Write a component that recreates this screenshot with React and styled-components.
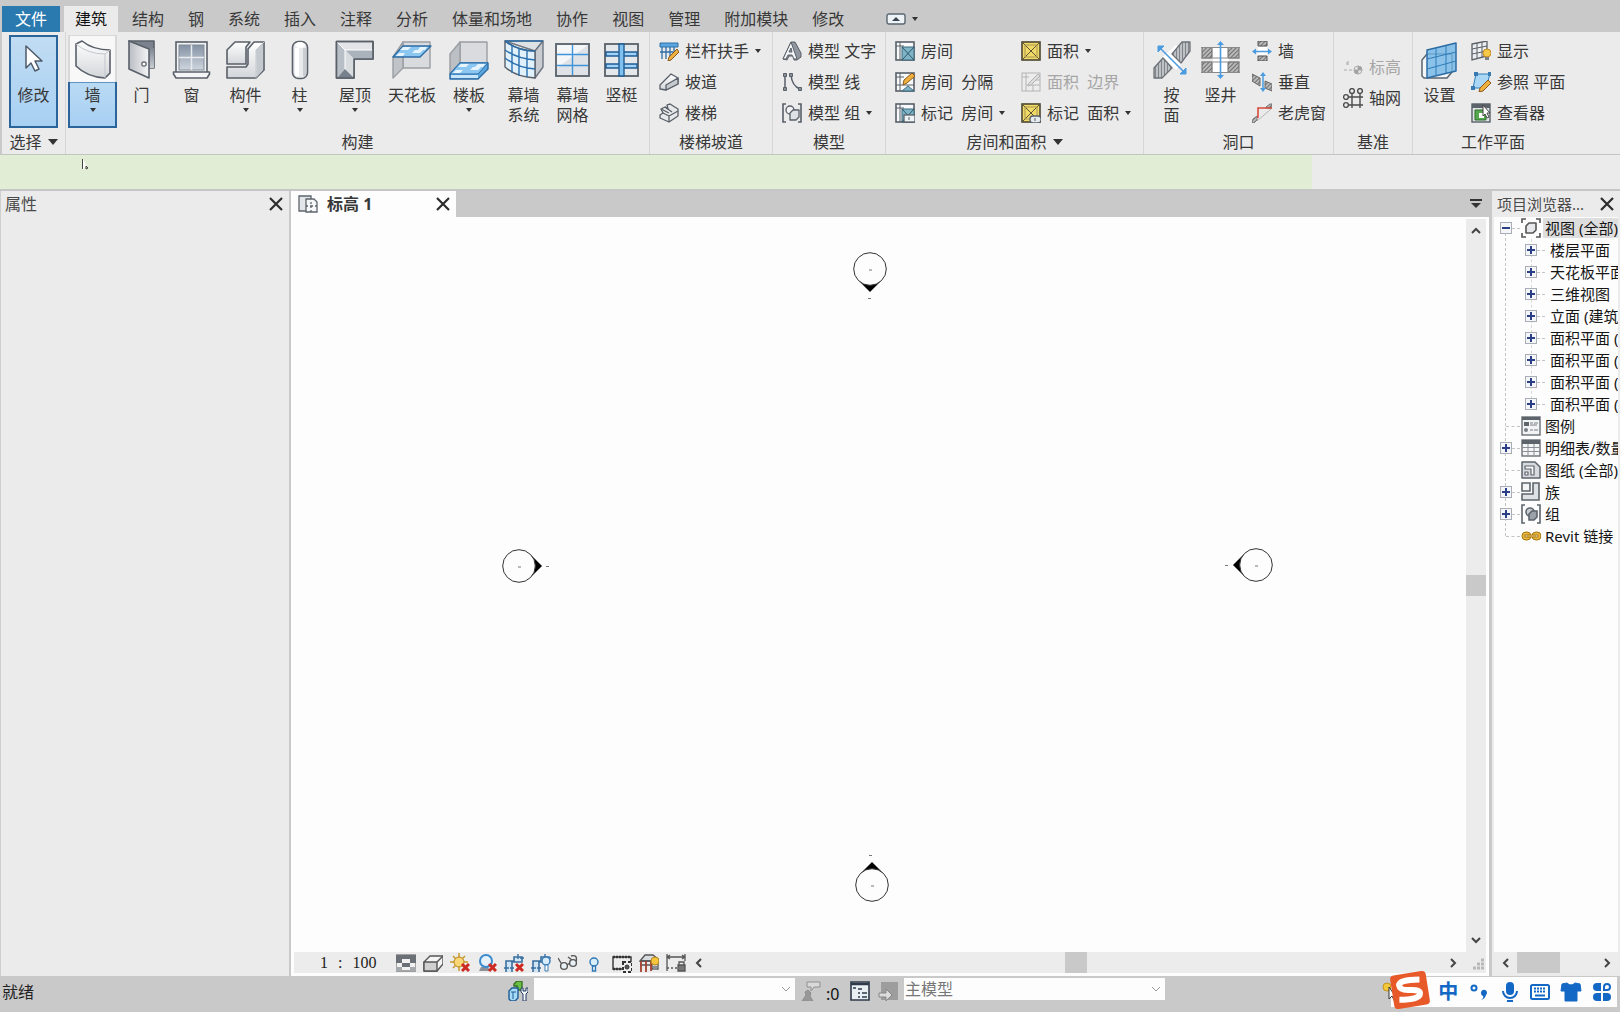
import React from "react";
import styled, { createGlobalStyle, css } from "styled-components";

const GlobalStyle = createGlobalStyle`
  * { box-sizing: border-box; }
  html, body { margin: 0; padding: 0; }
  body {
    background: #c9c9c9;
    color: #383838;
    font-family: "Noto Sans", "Noto Sans CJK SC", sans-serif;
    font-size: 16px;
    line-height: 20px;
    overflow: hidden;
  }
  button, select { font: inherit; color: inherit; border: 0; padding: 0; margin: 0; background: none; }
  ul { list-style: none; margin: 0; padding: 0; }
  h2, h3 { margin: 0; font: inherit; }
  svg { display: block; flex: none; }
`;

/* ---------- icons ---------- */

const D = "#596069";
const B = "#2c6ca5";

const Defs = () => (
  <DefsSvg aria-hidden="true">
    <defs>
      <linearGradient id="lightGrad" x1="0" y1="0" x2="0" y2="1">
        <stop offset="0" stopColor="#ffffff" />
        <stop offset="1" stopColor="#d3d6da" />
      </linearGradient>
      <linearGradient id="sideGrad" x1="0" y1="0" x2="1" y2="0">
        <stop offset="0" stopColor="#b9bdc3" />
        <stop offset="1" stopColor="#f4f5f6" />
      </linearGradient>
      <linearGradient id="darkGrad" x1="0" y1="0" x2="0" y2="1">
        <stop offset="0" stopColor="#7d8690" />
        <stop offset="1" stopColor="#c9cdd2" />
      </linearGradient>
      <linearGradient id="paneGrad" x1="0" y1="0" x2="0" y2="1">
        <stop offset="0" stopColor="#8492a4" />
        <stop offset="1" stopColor="#cfd6de" />
      </linearGradient>
      <pattern id="hatch" width="3" height="3" patternUnits="userSpaceOnUse" patternTransform="rotate(45)">
        <rect width="3" height="3" fill="#b8b8b8" />
        <rect width="1" height="3" fill="#6f6f6f" />
      </pattern>
      <pattern id="vhatch" width="3" height="3" patternUnits="userSpaceOnUse">
        <rect width="3" height="3" fill="#bfc2c5" />
        <rect width="1" height="3" fill="#80868c" />
      </pattern>
    </defs>
  </DefsSvg>
);

const large = {
  cursor: (
    <path d="M12 6 V28 L17 23 L21 31 L25 29 L21 21 L28 21Z" fill="#fff" stroke="#4e5a68" strokeWidth="1.5" strokeLinejoin="round" />
  ),
  wall: (
    <g stroke={D} strokeWidth="1.6" strokeLinejoin="round">
      <path d="M3 4 L9 1 Q20 10 37 10 V33 L32 38 Q14 37 3 26Z" fill="url(#lightGrad)" />
      <path d="M3 4 Q15 14 32 14 V38 M32 14 L37 10" fill="none" stroke="#c3c7cb" strokeWidth="1" />
    </g>
  ),
  door: (
    <g stroke={D} strokeWidth="1.6" strokeLinejoin="round">
      <path d="M7 1 H32 V28 H26Z" fill="#7b848e" />
      <path d="M26 8 H32 V28 H26Z" fill="url(#darkGrad)" stroke="none" />
      <path d="M7 1 L27 9 V38 L7 29Z" fill="url(#sideGrad)" />
      <circle cx="22" cy="24" r="2.2" fill="#fff" strokeWidth="1.2" />
    </g>
  ),
  window: (
    <g stroke={D} strokeWidth="1.6">
      <rect x="4" y="2" width="31" height="31" fill="#f2f3f4" />
      <rect x="7" y="5" width="25" height="25" fill="url(#paneGrad)" stroke="#838c97" strokeWidth="1" />
      <path d="M19.500 5 V30 M7 17.500 H32" stroke="#e8ebee" strokeWidth="1.500" />
      <path d="M1.500 32 H37.500 V34 L35 38 H4 L1.500 34Z" fill="#f4f5f6" strokeLinejoin="round" />
    </g>
  ),
  component: (
    <g stroke={D} strokeWidth="1.6" strokeLinejoin="round">
      <path d="M1 10 L9 2 H24 L20 7 V24 H1Z" fill="url(#lightGrad)" />
      <path d="M1 27 H20 L22 24 V9 L28 2 H38 V30 L30 38 H1Z" fill="url(#lightGrad)" />
      <path d="M30 38 V10 M30 10 L38 2" stroke="#c5c9cd" strokeWidth="1" fill="none" />
      <path d="M30 10 L37 3 V30 L31 37Z" fill="#c4c9cf" stroke="none" />
    </g>
  ),
  column: (
    <g>
      <rect x="12.500" y="1.500" width="15" height="37" rx="6" fill="#e9ebed" stroke={D} strokeWidth="1.600" />
      <rect x="15" y="8" width="4" height="28" fill="#fff" />
      <ellipse cx="20" cy="5" rx="5" ry="3" fill="#fff" />
      <rect x="23" y="8" width="3" height="28" fill="#c9cdd2" />
    </g>
  ),
  roof: (
    <g stroke={D} strokeWidth="1.6" strokeLinejoin="round">
      <path d="M1.500 1.500 H38 V19 H19 V38 H1.500Z" fill="#e2e4e7" />
      <path d="M10 10 H38 V19 H19Z" fill="#aab2bb" stroke="none" />
      <path d="M2 2 L10 10 V29 L2 38Z" fill="#b9bfc6" stroke="none" />
      <path d="M10 29 L18 37 H3Z" fill="#76818d" stroke="none" />
      <path d="M10 10 L19 19 V37 L10 29Z" fill="#d9dcdf" stroke="none" />
      <path d="M2 2 L10 10 H38 M10 10 V29" fill="none" stroke="#fff" strokeWidth="1" />
      <path d="M1.500 1.500 H38 V19 H19 V38 H1.500Z" fill="none" />
    </g>
  ),
  ceiling: (
    <g strokeLinejoin="round" strokeWidth="1.4">
      <path d="M11 2 H38 V28 H11Z" fill="#d9dbde" stroke="#9b9ea3" />
      <path d="M1 17 L11 2 V28 L1 38Z" fill="#c0c3c7" stroke="#9b9ea3" />
      <path d="M1 17 L11 6 H39 L28 17Z" fill="#8cc7f2" stroke={B} />
      <path d="M11 7 H19 L16 10 H8Z M23 10 H31 L28 13 H20Z M7 13 H13 L11 16 H4Z M28 7 H35 L33 10 H26Z" fill="#e6f4fd" />
    </g>
  ),
  floor: (
    <g strokeLinejoin="round" strokeWidth="1.400">
      <path d="M11 2 H38 V24 H11Z" fill="#d9dbde" stroke="#9b9ea3" />
      <path d="M1 14 L11 2 V24 L1 34Z" fill="#bcc0c5" stroke="#9b9ea3" />
      <path d="M1 34 L11 23 H39 V29 L29 39 H1Z" fill="#5aa5dc" stroke={B} />
      <path d="M1 34 L11 23 H39 L29 34Z" fill="#8cc7f2" stroke={B} strokeWidth="1" />
      <path d="M12 24 H20 L17 27 H9Z M24 27 H32 L29 30 H21Z M7 30 H14 L11 33 H4Z M29 24 H36 L34 27 H26Z" fill="#e6f4fd" />
      <path d="M2 35 H29 V38 H2Z" fill="#c8e6fa" />
    </g>
  ),
  curtainSystem: (
    <g strokeLinejoin="round" strokeWidth="1.400">
      <path d="M1 1 H39 L31 11Z" fill="#dfe2e5" stroke="#6d7680" />
      <path d="M31 11 L39 1 V27 L31 38Z" fill="#c9cdd2" stroke="#6d7680" />
      <path d="M1 1 Q14 11 31 11 V38 Q12 37 1 27Z" fill="#e1f1fb" stroke={D} />
      <path d="M1 10 Q14 19 31 20 M1 18 Q14 28 31 29 M8 6 V33 M15 9 V36 M23 11 V37" fill="none" stroke="#2a6fae" />
      <path d="M1 1 Q14 11 31 11 M1 1 H39" fill="none" stroke={B} />
    </g>
  ),
  curtainGrid: (
    <g>
      <rect x="3" y="4" width="33" height="32" fill="#dfe2e6" stroke={D} strokeWidth="1.800" />
      <path d="M4 5 H35 L4 28Z" fill="#f5f6f8" />
      <path d="M4 14.500 H35 M4 25.500 H35 M19.500 5 V35" stroke="#3f94da" strokeWidth="1.400" />
    </g>
  ),
  mullion: (
    <g>
      <rect x="3" y="4" width="33" height="32" fill="#e5e8eb" stroke={D} strokeWidth="1.800" />
      <path d="M4 12 H35 V16 H4Z M4 24 H35 V28 H4Z" fill="#9fd2f6" stroke="#1f5c94" strokeWidth="1.400" />
      <path d="M17 4 H22 V36 H17Z" fill="#7fc0ee" stroke="#1f5c94" strokeWidth="1.400" />
    </g>
  ),
  byFace: (
    <g strokeLinejoin="round">
      <path d="M11 17 L24 5 L35 17 L24 30Z" fill="#fff" />
      <path d="M20 14 L30 2 H38 V11 L29 23Z" fill="url(#vhatch)" stroke="#6b7177" strokeWidth="1.300" />
      <path d="M2 38 V28 L11 18 L20 28 L10 38Z" fill="url(#vhatch)" stroke="#6b7177" strokeWidth="1.300" />
      <path d="M8 8 L33 33" stroke="#4a9be0" strokeWidth="1.600" />
      <path d="M6 6 H12 L6 12Z M34 34 H28 L34 28Z" fill="#4a9be0" stroke="#4a9be0" />
    </g>
  ),
  shaft: (
    <g>
      <rect x="12" y="7" width="16" height="26" fill="#fff" />
      <path d="M1 7.500 H11 V18 H1Z M27 7.500 H38 V18 H27Z M1 22 H11 V32.500 H1Z M27 22 H38 V32.500 H27Z" fill="url(#hatch)" stroke="#6b6b6b" />
      <path d="M0 7.500 H39 M0 18 H39 M0 22 H39 M0 32.500 H39" stroke="#8a8a8a" />
      <path d="M19.500 4 V36" stroke="#4a9be0" strokeWidth="1.600" />
      <path d="M19.500 1 L23 5 H16Z M19.500 39 L23 35 H16Z" fill="#4a9be0" />
    </g>
  ),
  workPlane: (
    <g strokeLinejoin="round">
      <path d="M2 20 L7 14 H32 V32 L27 38 H4 L2 36Z" fill="#f4f6f8" stroke="#5a6672" strokeWidth="1.500" />
      <path d="M7 10 L36 3 V31 L7 38Z" fill="#6fb5e6" fillOpacity=".8" stroke={B} strokeWidth="1.500" />
      <path d="M16 8 V36 M26 6 V33 M7 19 L36 12 M7 29 L36 21" stroke="#2f7cb8" fill="none" />
    </g>
  ),
};

const roomBase = (
  <g>
    <rect x="1" y="1" width="18" height="18" fill="#f7f9fa" stroke={D} strokeWidth="1.600" />
    <path d="M5 1 V19 M1 5 H9" stroke={D} />
    <rect x="7" y="6" width="12" height="13" fill="#7fb4c8" stroke="#3d6a7c" />
    <path d="M7 6 L19 19 M19 6 L7 19" stroke="#2c5666" />
  </g>
);
const areaBase = (
  <g>
    <rect x="1" y="1" width="18" height="18" fill="#f1d968" stroke="#4d4630" strokeWidth="1.600" />
    <path d="M1 1 L19 19 M19 1 L1 19" stroke="#5c5334" />
    <rect x="4" y="4" width="12" height="12" fill="none" stroke="#a8984e" />
  </g>
);

const small = {
  railing: (
    <g>
      <path d="M1 2 H19 V6 H1Z" fill="#5aa6e0" stroke="#2f6ea6" />
      <path d="M3 6 V18 M7 6 V18 M11 6 V16 M15 6 V12 M1 11 H14" stroke="#2f6ea6" strokeWidth="1.300" />
      <path d="M18 8 L20 11 L12 19 L9 20 L10 16Z" fill="#f0b040" stroke="#8a5a1a" />
    </g>
  ),
  ramp: (
    <g stroke={D} strokeWidth="1.300" strokeLinejoin="round">
      <path d="M1 13 L12 2 L19 6 V12 L7 18 L1 17Z" fill="url(#lightGrad)" />
      <path d="M7 18 V13 L19 6 V12Z" fill="#c6cace" />
    </g>
  ),
  stairs: (
    <g fill="#e7e9eb" stroke={D} strokeWidth="1.300" strokeLinejoin="round">
      <path d="M1 12 L4 10 L2 6 L6 4 L9 6 L8 2 L11 1 L19 6 V13 L10 19 L1 15Z" />
      <path d="M4 10 L10 13 L19 8 M6 4 L13 9 M2 6 L10 10 M11 1 L8 2 M10 13 V19" fill="none" />
    </g>
  ),
  modelText: (
    <g strokeLinejoin="round" stroke={D}>
      <path d="M1 18 L9 1 H13 L19 12 V16 L15 19 H12 L11 15 H7 L5 19Z" fill="#8f969e" />
      <path d="M1 18 L9 1 L15 18 H12 L10 14 H6 L4 18Z" fill="#f5f6f7" />
      <path d="M7 11 H10 L9 7Z" fill="#8f969e" />
    </g>
  ),
  modelLine: (
    <g fill="none" stroke={D} strokeWidth="1.500">
      <path d="M3 3 V17 M9 3 Q10 14 18 17" />
      <path d="M1.500 1.500 H4.500 V4.500 H1.500Z M1.500 15.500 H4.500 V18.500 H1.500Z M7.500 1.500 H10.500 V4.500 H7.500Z M16.500 15.500 H19.500 V18.500 H16.500Z" fill="#8a9199" strokeWidth="1" />
    </g>
  ),
  modelGroup: (
    <g fill="none" stroke={D} strokeWidth="1.300">
      <path d="M4 1 H1 V19 H4 M16 1 H19 V19 H16" strokeWidth="1.600" />
      <circle cx="8" cy="7" r="4" fill="#f2f3f4" />
      <path d="M8 10 L11 7 H17 V14 L14 17 H8Z" fill="#dfe2e5" strokeLinejoin="round" />
    </g>
  ),
  room: roomBase,
  roomSeparator: (
    <g>
      <rect x="1" y="1" width="18" height="18" fill="#f7f9fa" stroke={D} strokeWidth="1.600" />
      <path d="M5 1 V19 M1 5 H9 M1 13 H19" stroke={D} />
      <path d="M7 19 L13 14 L19 19Z" fill="#7fb4c8" stroke="#3d6a7c" />
      <path d="M17 1 L20 4 L12 11 L8 13 L9 8Z" fill="#f0b040" stroke="#8a5a1a" strokeLinejoin="round" />
    </g>
  ),
  tagRoom: (
    <g>
      {roomBase}
      <rect x="9" y="12" width="11" height="7" fill="#eef3f5" stroke={D} strokeWidth="1.300" />
      <path d="M14 14 V17" stroke={D} />
    </g>
  ),
  area: areaBase,
  areaBoundary: (
    <g stroke="#b4b4b4" fill="none">
      <rect x="1" y="1" width="18" height="18" fill="#ececec" />
      <path d="M5 1 V19 M1 5 H8 M5 13 H19 M12 13 V19 M14 8 H19" />
      <path d="M17 2 L19 4 L10 13 L7 14 L8 11Z" fill="#dcdcdc" />
    </g>
  ),
  tagArea: (
    <g>
      {areaBase}
      <rect x="9" y="13" width="11" height="7" rx="3" fill="#e5eaed" stroke={D} strokeWidth="1.300" />
      <path d="M14 15 V18" stroke={D} />
    </g>
  ),
  openWall: (
    <g>
      <path d="M6 0 H15 V5 H6Z M6 15 H15 V20 H6Z" fill="url(#hatch)" stroke="#555" />
      <path d="M6 6 H15 V14 H6Z" fill="#fff" />
      <path d="M2 10.500 H18" stroke="#4a9be0" strokeWidth="1.500" />
      <path d="M0 10.500 L4 7.500 V13.500Z M20 10.500 L16 7.500 V13.500Z" fill="#4a9be0" />
    </g>
  ),
  openVertical: (
    <g>
      <path d="M0 2 L8 6 V14 L0 9Z M13 9 L20 12 V19 L13 16Z" fill="url(#hatch)" stroke="#666" />
      <path d="M11 3 V17" stroke="#4a9be0" strokeWidth="1.500" />
      <path d="M11 0 L14 4 H8Z M11 20 L14 16 H8Z" fill="#4a9be0" />
    </g>
  ),
  dormer: (
    <g>
      <path d="M14 4 L18 1 H20 V5 H14Z M1 16 L5 13 V17 L2 20 H0Z" fill="url(#hatch)" stroke="#777" />
      <path d="M5 18 L19 6" stroke="#b5b5b5" />
      <path d="M20 5 H6 V15" fill="none" stroke="#d8493a" strokeWidth="1.600" />
    </g>
  ),
  level: (
    <g stroke="#ababab">
      <path d="M1 13 H12" strokeDasharray="3 2" />
      <path d="M4 5 V8 M5 4 V8" />
      <circle cx="15" cy="13" r="4" fill="#e8e8e8" />
      <path d="M15 9 A4 4 0 0 1 19 13 H15Z M15 17 A4 4 0 0 1 11 13 H15Z" fill="#9c9c9c" />
    </g>
  ),
  grid: (
    <g fill="none" stroke="#4c4c4c" strokeWidth="1.400">
      <path d="M9 5 V20 M17 5 V20 M5 9 H20 M5 17 H20" />
      <circle cx="9" cy="3" r="2.400" />
      <circle cx="17" cy="3" r="2.400" />
      <circle cx="3" cy="9" r="2.400" />
      <circle cx="3" cy="17" r="2.400" />
    </g>
  ),
  show: (
    <g>
      <path d="M1 3 L16 0 V15 L1 19Z" fill="#eceeef" stroke={D} strokeWidth="1.300" />
      <path d="M6 2 V18 M11 1 V17 M1 8 L16 5 M1 13 L16 10" stroke={D} />
      <circle cx="16" cy="12" r="4" fill="#f8c84a" stroke="#c48a1c" />
      <path d="M14 16 H18 V19 H14Z" fill="#7a7f85" />
    </g>
  ),
  refPlane: (
    <g>
      <path d="M5 2 H19 L15 16 H2Z" fill="#a9d7f5" stroke="#2f7cb8" />
      <path d="M3 0 H7 V4 H3Z M17 0 H20 V4 H17Z M0 14 H4 V18 H0Z" fill="#3a7ab2" />
      <path d="M17 8 L20 11 L12 19 L8 20 L9 16Z" fill="#f0b040" stroke="#8a5a1a" />
    </g>
  ),
  viewer: (
    <g>
      <rect x="1" y="1" width="18" height="18" fill="#dfe3e6" stroke={D} strokeWidth="1.400" />
      <path d="M1 1 H19 V5 H1Z" fill="#5b6269" />
      <path d="M4 7 H15 V17 H4Z" fill="#56a94f" stroke="#2f6f2c" />
      <path d="M8 10 H13 V15 H8Z" fill="#fff" />
      <path d="M12 2 V13 L14 11 L16 15 L18 14 L16 10 H19Z" fill="#fff" stroke="#444" />
    </g>
  ),
};

const redX = <path d="M12 11 L19 18 M19 11 L12 18" stroke="#cc2a22" strokeWidth="3" />;
const bluePipe = (
  <g>
    <path d="M2 19 V8 H10 V4 H18 V9 H8 V19" fill="#cfe5f6" stroke="#3b6f9f" strokeWidth="1.600" />
    <path d="M0 15 H5 M6 15 H10 M14 1 V6 M16 5 H20" stroke="#3b6f9f" strokeWidth="1.400" />
  </g>
);
const viewIcons = {
  详细程度: (
    <g>
      <rect x="0" y="2" width="20" height="16" fill="#f1f1f1" stroke="#555" />
      <path d="M0 2 H20 V6 H0Z M0 6 H6 V10 H0Z M14 6 H20 V10 H14Z M6 10 H14 V14 H6Z" fill="#6b7076" />
      <path d="M0 14 H6 V18 H0Z M14 14 H20 V18 H14Z" fill="#a4a9ae" />
    </g>
  ),
  视觉样式: (
    <g fill="#f4f4f4" stroke="#555" strokeWidth="1.400" strokeLinejoin="round">
      <path d="M1 9 L7 3 H20 V11 L14 18 H1Z" />
      <path d="M1 9 H14 V18 H1Z" fill="#d0d0d0" />
      <path d="M14 9 L20 3" />
    </g>
  ),
  日光路径: (
    <g>
      <path d="M9 0 V18 M0 9 H18 M3 3 L15 15 M15 3 L3 15" stroke="#c79a2b" strokeWidth="1.500" />
      <circle cx="9" cy="9" r="5" fill="#f9d676" stroke="#b8861c" />
      {redX}
    </g>
  ),
  阴影: (
    <g>
      <path d="M2 18 H13 L11 14 H4Z" fill="#8b9096" />
      <circle cx="9" cy="8" r="6" fill="#e5f2fb" stroke="#3b8bcf" strokeWidth="2" />
      {redX}
    </g>
  ),
  裁剪视图: (
    <g>
      {bluePipe}
      {redX}
    </g>
  ),
  显示裁剪区域: (
    <g>
      {bluePipe}
      <circle cx="15" cy="8" r="4" fill="#d8ecfa" stroke="#3b7db8" strokeWidth="1.500" />
      <path d="M14 12 H17 V18 H14Z" fill="#fff" stroke="#3b7db8" />
    </g>
  ),
  临时隐藏隔离: (
    <g fill="none" stroke="#555" strokeWidth="1.400">
      <path d="M0 5 L3 10 M10 4 L14 7 M13 3 Q20 1 18 9" />
      <circle cx="6" cy="13" r="3.400" fill="#e9f1f6" />
      <circle cx="15" cy="10" r="3.400" fill="#e9f1f6" />
      <path d="M9 12 L12 10" />
    </g>
  ),
  显示隐藏的图元: (
    <g stroke="#2f77b4" strokeWidth="1.400">
      <circle cx="9" cy="9" r="4" fill="#d9eefc" />
      <path d="M7.500 13 H10.500 V18 H7.500Z" fill="#eef6fb" />
    </g>
  ),
  临时视图属性: (
    <g fill="none" stroke="#333">
      <path d="M1 4 H19 V16 H1Z" strokeWidth="1.400" />
      <path d="M1 4 H19 M1 16 H10" strokeWidth="2.500" strokeDasharray="2 1" />
      <path d="M11 9 H20 V19 H11Z" fill="#eee" strokeWidth="2" strokeDasharray="3 2" />
      <circle cx="15" cy="14" r="2" fill="#555" />
    </g>
  ),
  分析模型: (
    <g>
      <path d="M1 8 L6 2 H14 L19 6 V16 H13 V8Z" fill="#d9dcdf" stroke="#555" strokeWidth="1.300" />
      <path d="M1 8 H13 M1 12 H13" stroke="#555" strokeWidth="1.400" />
      <path d="M2 8 V19 M7 8 V19 M12 8 V18" stroke="#a5402f" strokeWidth="1.800" />
      <circle cx="16" cy="8" r="4" fill="#f8c53f" stroke="#b8861c" />
      <path d="M14 13 H18 V17 H14Z" fill="#8a8f95" />
    </g>
  ),
  显示约束: (
    <g stroke="#555" fill="none" strokeWidth="1.300">
      <path d="M1 1 V18 M19 1 V8 M1 4 H19 M4 2 L1 4 L4 6 M16 2 L19 4 L16 6" />
      <path d="M1 15 H12" strokeDasharray="2 2" />
      <path d="M12 12 H19 V18 H12Z" fill="#777" />
      <path d="M13 12 V9 H18 V12" />
    </g>
  ),
};

const treeIcons = {
  views: (
    <g fill="none" stroke="#555" strokeWidth="1.600">
      <path d="M5 1 H1 V5 M15 1 H19 V5 M1 15 V19 H5 M19 15 V19 H15" />
      <path d="M5 8 L8 5 H15 V12 L12 15 H5Z" fill="#e6e8eb" strokeLinejoin="round" />
    </g>
  ),
  legend: (
    <g>
      <rect x="1" y="1" width="18" height="18" fill="#f2f3f4" stroke="#6a7077" strokeWidth="1.400" />
      <path d="M1 1 H19 V4 H1Z" fill="#5d646c" />
      <path d="M3 6 H8 V10 H3Z" fill="#5d646c" />
      <circle cx="5" cy="14" r="2" fill="#777e86" />
      <path d="M9 7 H12 M13 7 H17 M9 9 H16 M9 14 H12 M13 14 H17" stroke="#777e86" />
    </g>
  ),
  schedule: (
    <g>
      <rect x="1" y="2" width="18" height="16" fill="#f4f5f6" stroke="#6a7077" strokeWidth="1.400" />
      <path d="M1 2 H19 V6 H1Z" fill="#5d646c" />
      <path d="M1 9.500 H19 M1 13.500 H19 M7 6 V17 M13 6 V17" stroke="#8a9097" />
    </g>
  ),
  sheet: (
    <g fill="#d7dbdf" stroke="#5d646c" strokeWidth="1.500" strokeLinejoin="round">
      <path d="M1 2 H14 L19 7 V18 H1Z" />
      <path d="M4 6 H13 V15 H10 V9 H4Z M4 12 H7 V15 H4Z" fill="#f8f9fa" strokeWidth="1.200" />
    </g>
  ),
  family: (
    <g fill="#f4f5f6" stroke="#5d646c" strokeWidth="1.600">
      <path d="M1 1 H9 V9 H1Z" />
      <path d="M12 1 H18 V18 H1 V12 H12Z" fill="#dfe2e5" />
    </g>
  ),
  group: (
    <g fill="none" stroke="#5d646c" strokeWidth="1.600">
      <path d="M4 1 H1 V19 H4 M16 1 H19 V19 H16" />
      <circle cx="9" cy="8" r="4" fill="#c9cdd2" />
      <path d="M8 10 L11 7 H16 V13 L13 16 H8Z" fill="#9aa1a9" />
    </g>
  ),
  link: (
    <g fill="none" stroke="#a87610">
      <rect x="1" y="6" width="9" height="8" rx="4" fill="#e8b93c" />
      <rect x="11" y="6" width="9" height="8" rx="4" fill="#e8b93c" />
      <rect x="4" y="9" width="3" height="2" fill="#fdfdfd" />
      <rect x="14" y="9" width="3" height="2" fill="#fdfdfd" />
      <path d="M7 10 H14" strokeWidth="3" />
      <path d="M7 10 H14" stroke="#f3cf67" />
    </g>
  ),
};

const LargeIcon = ({ name }) => (
  <svg width="40" height="40" viewBox="0 0 40 40" aria-hidden="true">{large[name]}</svg>
);
const SmallIcon = ({ art }) => (
  <svg width="20" height="20" viewBox="0 0 20 20" aria-hidden="true">{art}</svg>
);
const Arrow = ({ w = 6 }) => (
  <svg width={w} height={w / 2 + 1} viewBox="0 0 12 8" preserveAspectRatio="none" aria-hidden="true">
    <path d="M0 0 H12 L6 8Z" fill="#333" />
  </svg>
);
const Chevron = ({ turn = 0, color = "#444", weight = 2 }) => (
  <svg width="12" height="12" viewBox="0 0 12 12" aria-hidden="true">
    <path d="M2 4 L6 8 L10 4" fill="none" stroke={color} strokeWidth={weight} transform={`rotate(${turn} 6 6)`} />
  </svg>
);
const Cross = () => (
  <svg width="14" height="14" viewBox="0 0 14 14" aria-hidden="true">
    <path d="M1 1 L13 13 M13 1 L1 13" stroke="#2c2c2c" strokeWidth="2.200" />
  </svg>
);

/* ---------- layout parts ---------- */

const DefsSvg = styled.svg`
  position: absolute;
  width: 0;
  height: 0;
`;

const Window = styled.div`
  display: flex;
  flex-direction: column;
  height: 100vh;
  background: #c9c9c9;
`;

const TabRow = styled.nav`
  display: flex;
  align-items: stretch;
  height: 32px;
  padding: 6px 0 0 2px;
`;

const RibbonTab = styled.button`
  padding: 0 12px;
  white-space: nowrap;
  ${({ $kind }) =>
    $kind === "file" &&
    css`
      width: 58px;
      margin-right: 4px;
      background: #2a7ab0;
      color: #fff;
    `}
  ${({ $kind }) =>
    $kind === "active" &&
    css`
      width: 54px;
      padding: 0;
      margin-right: 2px;
      background: #ebebeb;
      color: #111;
    `}
`;

const MinimizeButton = styled.button`
  display: flex;
  align-items: center;
  gap: 6px;
  margin-left: 30px;
`;

const Ribbon = styled.div`
  display: flex;
  height: 123px;
  margin-left: 2px;
  background: #ebebeb;
  border-bottom: 1px solid #c2c5c2;
`;

const Panel = styled.section`
  display: flex;
  flex-direction: column;
  flex: none;
  width: ${({ $w }) => $w}px;
  border-right: ${({ $last }) => ($last ? "0" : "1px solid #d6d6d6")};
`;

const PanelBody = styled.div`
  display: flex;
  flex: 1;
  padding: 3px 0 0 ${({ $pad }) => $pad}px;
`;

const PanelTitle = styled.h3`
  display: flex;
  align-items: center;
  justify-content: center;
  gap: 6px;
  height: 24px;
`;

const BigButton = styled.button`
  display: flex;
  flex-direction: column;
  align-items: center;
  width: ${({ $w }) => $w}px;
  height: 93px;
  border: 1px solid transparent;
  padding-top: 4px;
  ${({ $state }) =>
    $state === "on" &&
    css`
      border: 2px solid #2a649b;
      padding-top: 3px;
      background: linear-gradient(#c1dcf2, #a8d0f3);
    `}
  ${({ $state }) =>
    $state === "split" &&
    css`
      border: 2px solid #2a649b;
      border-top: 1px solid #d5d5d5;
      background: linear-gradient(#f8f8f8 0 46px, #5d93c2 46px 47px, #b9daf4 47px, #a8d0f3);
      border-image: linear-gradient(#d8d8d8 0 48px, #2a649b 48px) 1;
    `}
`;

const BigLabel = styled.span`
  display: block;
  margin-top: 5px;
  line-height: 20px;
  white-space: pre-line;
  text-align: center;
`;

const ArrowSlot = styled.span`
  display: flex;
  margin-top: 3px;
`;

const Stack = styled.div`
  display: flex;
  flex-direction: column;
  justify-content: ${({ $middle }) => ($middle ? "center" : "flex-start")};
  width: ${({ $w }) => ($w ? `${$w}px` : "auto")};
`;

const SideStack = styled(Stack)`
  padding-left: 7px;
`;

const SmallButton = styled.button`
  display: flex;
  align-items: center;
  gap: ${({ $tight }) => ($tight ? 6 : 8)}px;
  height: 31px;
  white-space: pre;
  color: ${({ disabled }) => (disabled ? "#a6a6a6" : "inherit")};
`;

const OptionsBar = styled.div`
  height: 34px;
  background: #ebebeb;
  position: relative;
`;
const OptionsFill = styled.div`
  width: 81%;
  height: 100%;
  background: #e2edd5;
`;
const Pointer = styled.svg`
  position: absolute;
  left: 80px;
  top: 3px;
`;

const Main = styled.div`
  display: flex;
  flex: 1;
  min-height: 0;
  border-top: 2px solid #c6c6c6;
`;

const Properties = styled.aside`
  width: 289px;
  background: #ebebeb;
  border-left: 1px solid #cfcfcf;
`;

const PaneHeader = styled.header`
  display: flex;
  align-items: center;
  justify-content: space-between;
  height: 26px;
  padding: 0 6px 0 4px;
  background: #ebebeb;
  color: #4a4a4a;
  white-space: nowrap;
`;

const BrowserHeader = styled(PaneHeader)`
  padding: 0 4px 0 3px;
  font-size: 15px;
`;

const IconButton = styled.button`
  display: flex;
  align-items: center;
  justify-content: center;
  width: ${({ $w }) => $w || 14}px;
  flex: none;
`;

const ViewPane = styled.main`
  display: flex;
  flex-direction: column;
  flex: 1;
  min-width: 0;
  border-left: 2px solid #c9c9c9;
  border-right: 3px solid #c9c9c9;
`;

const DocTabs = styled.div`
  display: flex;
  justify-content: space-between;
  height: 26px;
  padding-right: 6px;
  background: #c9c9c9;
`;

const DocTab = styled.div`
  display: flex;
  align-items: center;
  width: 165px;
  padding: 0 6px 0 7px;
  background: #fdfdfd;
`;
const DocName = styled.button`
  display: flex;
  align-items: center;
  gap: 9px;
  flex: 1;
  font-weight: 700;
`;

const ViewBody = styled.div`
  display: flex;
  flex-direction: column;
  flex: 1;
  min-height: 0;
  padding: 0 3px 3px 3px;
  background: #fdfdfd;
`;
const DrawingRow = styled.div`
  display: flex;
  flex: 1;
  min-height: 0;
`;
const Canvas = styled.div`
  position: relative;
  flex: 1;
  overflow: hidden;
`;
const Marker = styled.svg`
  position: absolute;
  left: ${({ $x }) => $x}px;
  top: ${({ $y }) => $y}px;
`;

const VScroll = styled.div`
  display: flex;
  flex-direction: column;
  align-items: center;
  justify-content: space-between;
  width: 20px;
  margin-top: 2px;
  padding: 6px 0;
  background: #ececec;
`;
const Thumb = styled.div`
  width: ${({ $w }) => $w}px;
  height: 21px;
  background: #c9c9c9;
`;

const ViewBar = styled.div`
  display: flex;
  align-items: center;
  height: 21px;
  background: #ececec;
`;
const Scale = styled.button`
  width: 102px;
  padding-left: 26px;
  text-align: left;
  color: #222;
  font-family: "Liberation Serif", serif;
`;
const Colon = styled.span`
  margin: 0 6px;
`;
const ViewTools = styled.div`
  display: flex;
  gap: 7px;
`;
const HScroll = styled.div`
  display: flex;
  flex: 1;
  align-items: center;
  justify-content: ${({ $start }) => ($start ? "flex-start" : "space-between")};
  height: 21px;
  background: #ececec;
`;
const Spacer = styled.div`
  flex: 1;
`;

const Browser = styled.aside`
  display: flex;
  flex-direction: column;
  width: 128px;
  padding: 0 2px 3px;
  background: #ebebeb;
`;
const BrowserScroll = styled.div`
  display: flex;
  flex: none;
`;
const Tree = styled.ul`
  position: relative;
  flex: 1;
  overflow: hidden;
  background: #fdfdfd;
  color: #151515;
  font-size: 15px;
  &::before {
    content: "";
    position: absolute;
    left: 11px;
    top: 16px;
    height: 303px;
    border-left: 1px dashed #c4c4c4;
  }
  &::after {
    content: "";
    position: absolute;
    left: 37px;
    top: 22px;
    height: 160px;
    border-left: 1px dashed #d8d8d8;
  }
`;
const TreeRow = styled.li`
  position: relative;
  z-index: 1;
  display: flex;
  align-items: center;
  height: 22px;
  padding-left: ${({ $level }) => ($level ? 31 : 6)}px;
  white-space: nowrap;
`;
const Expander = styled.button`
  display: flex;
  flex: none;
  align-items: center;
  justify-content: center;
  width: 12px;
  height: 12px;
  border: 1px solid #a9adb5;
  background: #f5f6f9;
`;
const Connector = styled.span`
  flex: none;
  width: ${({ $w }) => $w}px;
  margin-left: ${({ $in }) => $in || 0}px;
  margin-right: 1px;
  border-top: 1px dashed #c4c4c4;
`;
const TreeLabel = styled.span`
  flex: 1 0 auto;
  margin-left: 2px;
  padding-left: 2px;
  background: ${({ $on }) => ($on ? "#dedede" : "transparent")};
`;

const StatusBar = styled.footer`
  display: flex;
  align-items: flex-start;
  height: 36px;
  padding: 2px 3px 0 2px;
`;
const StatusText = styled.div`
  width: 506px;
  padding-top: 4px;
  color: #222;
`;
const StatusButton = styled.button`
  display: flex;
  padding-top: 3px;
  margin-right: ${({ $gap }) => $gap}px;
`;
const Count = styled.span`
  width: 24px;
  padding-top: 6px;
  color: #111;
`;
const SelectBox = styled.div`
  position: relative;
  width: 261px;
  height: 22px;
  margin-right: ${({ $gap }) => $gap}px;
`;
const Select = styled.select`
  width: 100%;
  height: 22px;
  padding: 0 30px 0 1px;
  border-radius: 0;
  background: #fdfdfd;
  color: #777;
  appearance: none;
`;
const SelectMark = styled.span`
  position: absolute;
  right: 3px;
  top: 5px;
  pointer-events: none;
`;

const Ime = styled.div`
  display: flex;
  align-items: center;
  width: 226px;
  height: 30px;
  margin-left: auto;
  margin-top: -1px;
  background: #fdfdfd;
  position: relative;
`;
const ImeLogo = styled.svg`
  position: absolute;
  left: -10px;
  top: -8px;
`;
const ImeTools = styled.div`
  display: grid;
  grid-template-columns: repeat(6, 1fr);
  width: 184px;
  margin-left: auto;
  justify-items: center;
`;
const ImeButton = styled.button`
  display: flex;
  align-items: center;
  height: 24px;
  color: #1268c4;
  font-size: 20px;
  font-weight: 700;
`;

/* ---------- data ---------- */

const tabs = ["结构", "钢", "系统", "插入", "注释", "分析", "体量和场地", "协作", "视图", "管理", "附加模块", "修改"];

const build = [
  { icon: "wall", label: "墙", w: 49, menu: true, state: "split" },
  { icon: "door", label: "门", w: 49 },
  { icon: "window", label: "窗", w: 51 },
  { icon: "component", label: "构件", w: 57, menu: true },
  { icon: "column", label: "柱", w: 51, menu: true },
  { icon: "roof", label: "屋顶", w: 60, menu: true },
  { icon: "ceiling", label: "天花板", w: 54 },
  { icon: "floor", label: "楼板", w: 60, menu: true },
  { icon: "curtainSystem", label: "幕墙\n系统", w: 49 },
  { icon: "curtainGrid", label: "幕墙\n网格", w: 49 },
  { icon: "mullion", label: "竖梃", w: 49 },
];

const tree = [
  { label: "视图 (全部)", icon: "views", box: "minus", on: true },
  { label: "楼层平面", level: 1 },
  { label: "天花板平面", level: 1 },
  { label: "三维视图", level: 1 },
  { label: "立面 (建筑", level: 1 },
  { label: "面积平面 (", level: 1 },
  { label: "面积平面 (", level: 1 },
  { label: "面积平面 (", level: 1 },
  { label: "面积平面 (", level: 1 },
  { label: "图例", icon: "legend" },
  { label: "明细表/数量", icon: "schedule", box: "plus" },
  { label: "图纸 (全部)", icon: "sheet" },
  { label: "族", icon: "family", box: "plus" },
  { label: "组", icon: "group", box: "plus" },
  { label: "Revit 链接", icon: "link" },
];

const markers = [
  { x: 545, y: 21, turn: 0 },
  { x: 194, y: 318, turn: -90 },
  { x: 931, y: 317, turn: 90 },
  { x: 547, y: 637, turn: 180 },
];

/* ---------- pieces ---------- */

const Big = ({ icon, label, w, menu, state }) => (
  <BigButton $w={w} $state={state}>
    <LargeIcon name={icon} />
    <BigLabel>{label}</BigLabel>
    {menu && (
      <ArrowSlot>
        <Arrow />
      </ArrowSlot>
    )}
  </BigButton>
);

const Small = ({ icon, children, menu, disabled, tight }) => (
  <SmallButton disabled={disabled} $tight={tight}>
    <SmallIcon art={small[icon]} />
    <span>{children}</span>
    {menu && <Arrow />}
  </SmallButton>
);

const Elevation = ({ x, y, turn }) => {
  const tip = { 0: [31, 61], "-90": [60, 32], 90: [2, 32], 180: [30, 2] }[turn];
  return (
    <Marker $x={x} $y={y} width="62" height="62" viewBox="0 0 62 62" aria-hidden="true">
      <g transform={`rotate(${turn} 31 31)`}>
        <path d="M19 42 L31 54 L43 42Z" fill="#000" />
        <circle cx="31" cy="31" r="16.300" fill="#fdfdfd" stroke="#333" />
      </g>
      <path d={`M30 32 H33 M${tip[0] - 2} ${tip[1] - 0.5} h3`} stroke="#777" />
    </Marker>
  );
};

const Box = ({ kind }) => (
  <Expander aria-label={kind === "minus" ? "折叠" : "展开"}>
    <svg width="8" height="8" viewBox="0 0 8 8" aria-hidden="true">
      <path d={kind === "minus" ? "M0 4 H8" : "M0 4 H8 M4 0 V8"} stroke="#2b3f86" strokeWidth="2" />
    </svg>
  </Expander>
);

const StatusIcons = {
  worksets: (
    <g>
      <path d="M6 3 L9 0 H14 V9 H9 V5 H6Z" fill="#6cbf45" stroke="#2e6e1d" strokeWidth="1.300" />
      <path d="M1 10 L4 7 H10 V17 L7 20 H3 L1 18Z" fill="#a8dafa" stroke="#1f5c94" strokeWidth="1.400" />
      <path d="M5 11 V18 M3 11 H8" stroke="#1f5c94" />
      <path d="M13 7 V11 L15 13 V20 H18 V13 L20 11 V7 H18 V10 H15 V7Z" fill="#f3f5f7" stroke="#253f66" />
    </g>
  ),
  request: (
    <g fill="#d9d9d9" stroke="#8f8f8f">
      <path d="M6 1 H19 V6 H13 L10 10 V6 H6Z" />
      <path d="M1 20 L5 14 L4 11 L7 9 L10 12 L9 15 L12 20Z" fill="#979797" />
    </g>
  ),
  options: (
    <g fill="none" stroke="#2f3a48" strokeWidth="1.600">
      <path d="M1 1 H19 V19 H1Z" fill="#e9eef3" />
      <path d="M1 3 H19" strokeWidth="2.500" />
      <path d="M3 7 H6 M8 8 H12 M8 12 H10 M12 12 H17 M8 16 H10 M12 16 H17" />
    </g>
  ),
  exclude: (
    <g>
      <path d="M3 1 H20 V19 H3Z" fill="#9d9d9d" />
      <path d="M1 12 H8 V8 L14 14 L8 20 V16 H1Z" fill="#dcdcdc" stroke="#868686" />
    </g>
  ),
};

const imeIcons = [
  {
    name: "标点",
    art: (
      <g>
        <circle cx="7" cy="8" r="2.500" fill="none" stroke="#1268c4" strokeWidth="2" />
        <path d="M14 13 A3 3 0 1 1 19 15 Q18 19 14 20 Q17 18 16 16 A3 3 0 0 1 14 13Z" fill="#1268c4" />
      </g>
    ),
  },
  {
    name: "语音",
    art: (
      <g>
        <rect x="8" y="2" width="8" height="13" rx="4" fill="#1268c4" />
        <path d="M5 11 A7 7 0 0 0 19 11 M9 21 H15" fill="none" stroke="#1268c4" strokeWidth="2" />
      </g>
    ),
  },
  {
    name: "键盘",
    art: (
      <g fill="none" stroke="#1268c4">
        <rect x="3" y="5" width="18" height="14" rx="1.500" strokeWidth="2" />
        <path d="M6 8.500 H18 M6 11.500 H18" strokeWidth="2" strokeDasharray="2 1" />
        <path d="M7 15.500 H17" strokeWidth="2" />
      </g>
    ),
  },
  {
    name: "皮肤",
    art: <path d="M8 3 Q12 7 16 3 L21 4 L22 11 H18 V21 H6 V11 H2 L3 4Z" fill="#1268c4" stroke="#1268c4" strokeLinejoin="round" />,
  },
  {
    name: "工具箱",
    art: (
      <g fill="#1268c4">
        <path d="M7 3 H11 V11 H7 A4 4 0 0 1 7 3Z" />
        <path d="M7 13 H11 V21 H7 A4 4 0 0 1 7 13Z" />
        <path d="M13 13 H17 A4 4 0 0 1 17 21 H13Z" />
        <path d="M14 10 V7 A3 3 0 1 1 17 10Z" fill="none" stroke="#1268c4" strokeWidth="2" />
      </g>
    ),
  },
];

export default function App() {
  return (
    <Window>
      <GlobalStyle />
      <Defs />
      <TabRow>
        <RibbonTab $kind="file">文件</RibbonTab>
        <RibbonTab $kind="active">建筑</RibbonTab>
        {tabs.map((t) => (
          <RibbonTab key={t}>{t}</RibbonTab>
        ))}
        <MinimizeButton aria-label="最小化">
          <svg width="20" height="12" viewBox="0 0 20 12" aria-hidden="true">
            <rect x="1" y="1" width="18" height="10" rx="2" fill="#eef3f8" stroke="#5a6570" strokeWidth="1.400" />
            <path d="M6 8 L10 4 L14 8Z" fill="#3a444e" />
          </svg>
          <Arrow />
        </MinimizeButton>
      </TabRow>

      <Ribbon>
        <Panel $w={64}>
          <PanelBody $pad={7}>
            <Big icon="cursor" label="修改" w={49} state="on" />
          </PanelBody>
          <PanelTitle>
            选择 <Arrow w={10} />
          </PanelTitle>
        </Panel>
        <Panel $w={584}>
          <PanelBody $pad={2}>
            {build.map((b) => (
              <Big key={b.icon} {...b} />
            ))}
          </PanelBody>
          <PanelTitle>构建</PanelTitle>
        </Panel>
        <Panel $w={123}>
          <PanelBody $pad={9}>
            <Stack>
              <Small icon="railing" tight menu>栏杆扶手</Small>
              <Small icon="ramp" tight>坡道</Small>
              <Small icon="stairs" tight>楼梯</Small>
            </Stack>
          </PanelBody>
          <PanelTitle>楼梯坡道</PanelTitle>
        </Panel>
        <Panel $w={113}>
          <PanelBody $pad={9}>
            <Stack>
              <Small icon="modelText" tight>模型 文字</Small>
              <Small icon="modelLine" tight>模型 线</Small>
              <Small icon="modelGroup" tight menu>模型 组</Small>
            </Stack>
          </PanelBody>
          <PanelTitle>模型</PanelTitle>
        </Panel>
        <Panel $w={258}>
          <PanelBody $pad={9}>
            <Stack $w={126}>
              <Small icon="room" tight>房间</Small>
              <Small icon="roomSeparator" tight>{"房间  分隔"}</Small>
              <Small icon="tagRoom" tight menu>{"标记  房间"}</Small>
            </Stack>
            <Stack>
              <Small icon="area" tight menu>面积</Small>
              <Small icon="areaBoundary" tight disabled>{"面积  边界"}</Small>
              <Small icon="tagArea" tight menu>{"标记  面积"}</Small>
            </Stack>
          </PanelBody>
          <PanelTitle>
            房间和面积 <Arrow w={10} />
          </PanelTitle>
        </Panel>
        <Panel $w={190}>
          <PanelBody $pad={3}>
            <Big icon="byFace" label={"按\n面"} w={49} />
            <Big icon="shaft" label="竖井" w={49} />
            <SideStack>
              <Small icon="openWall" tight>墙</Small>
              <Small icon="openVertical" tight>垂直</Small>
              <Small icon="dormer" tight>老虎窗</Small>
            </SideStack>
          </PanelBody>
          <PanelTitle>洞口</PanelTitle>
        </Panel>
        <Panel $w={79}>
          <PanelBody $pad={9}>
            <Stack $middle>
              <Small icon="level" tight disabled>标高</Small>
              <Small icon="grid" tight>轴网</Small>
            </Stack>
          </PanelBody>
          <PanelTitle>基准</PanelTitle>
        </Panel>
        <Panel $w={160} $last>
          <PanelBody $pad={2}>
            <Big icon="workPlane" label="设置" w={49} />
            <SideStack>
              <Small icon="show" tight>显示</Small>
              <Small icon="refPlane" tight>参照 平面</Small>
              <Small icon="viewer" tight>查看器</Small>
            </SideStack>
          </PanelBody>
          <PanelTitle>工作平面</PanelTitle>
        </Panel>
      </Ribbon>

      <OptionsBar>
        <OptionsFill />
        <Pointer width="10" height="14" viewBox="0 0 10 14" aria-hidden="true">
          <path d="M3 1 V12 L5 9 L7 9Z" fill="#fff" />
          <path d="M2.500 1 V11 M6 8 L8 10 L6 11Z" stroke="#444" fill="none" />
        </Pointer>
      </OptionsBar>

      <Main>
        <Properties>
          <PaneHeader>
            <h2>属性</h2>
            <IconButton aria-label="关闭">
              <Cross />
            </IconButton>
          </PaneHeader>
        </Properties>

        <ViewPane>
          <DocTabs>
            <DocTab>
              <DocName>
                <SmallIcon
                  art={
                    <g fill="#e3e6e9" stroke="#5d646c" strokeWidth="1.300">
                      <path d="M1 2 H13 V17 H1Z" />
                      <path d="M8 5 H16 L19 8 V18 H8Z" fill="#f6f7f8" />
                      <path d="M8 12 H13 M13 8 V18 M13 12 H19" fill="none" strokeDasharray="2 2" />
                    </g>
                  }
                />
                <span>标高 1</span>
              </DocName>
              <IconButton aria-label="关闭视图">
                <Cross />
              </IconButton>
            </DocTab>
            <IconButton aria-label="视图列表">
              <svg width="12" height="10" viewBox="0 0 12 10" aria-hidden="true">
                <path d="M0 1 H12" stroke="#333" strokeWidth="2" />
                <path d="M1 4 H11 L6 9Z" fill="#333" />
              </svg>
            </IconButton>
          </DocTabs>
          <ViewBody>
            <DrawingRow>
              <Canvas>
                {markers.map((m) => (
                  <Elevation key={m.turn} {...m} />
                ))}
              </Canvas>
              <VScroll>
                <IconButton aria-label="向上滚动">
                  <Chevron turn={180} />
                </IconButton>
                <Thumb $w={20} />
                <IconButton aria-label="向下滚动">
                  <Chevron />
                </IconButton>
              </VScroll>
            </DrawingRow>
            <ViewBar>
              <Scale>
                1<Colon> : </Colon>100
              </Scale>
              <ViewTools>
                {Object.entries(viewIcons).map(([name, art]) => (
                  <IconButton key={name} $w={20} aria-label={name}>
                    <SmallIcon art={art} />
                  </IconButton>
                ))}
              </ViewTools>
              <HScroll>
                <IconButton $w={26} aria-label="向左滚动">
                  <Chevron turn={90} />
                </IconButton>
                <Thumb $w={22} />
                <IconButton $w={26} aria-label="向右滚动">
                  <Chevron turn={-90} />
                </IconButton>
              </HScroll>
              <svg width="20" height="20" viewBox="0 0 20 20" aria-hidden="true">
                <path d="M15 7 h3 M11 11 h3 M15 11 h3 M7 15 h3 M11 15 h3 M15 15 h3" stroke="#b8b8b8" strokeWidth="3" />
              </svg>
            </ViewBar>
          </ViewBody>
        </ViewPane>

        <Browser>
          <BrowserHeader>
            <h2>项目浏览器...</h2>
            <IconButton aria-label="关闭">
              <Cross />
            </IconButton>
          </BrowserHeader>
          <Tree>
            {tree.map((n, i) => (
              <TreeRow key={i} $level={n.level}>
                {n.level || n.box ? <Box kind={n.box} /> : null}
                {n.level || n.box ? <Connector $w={8} /> : <Connector $w={14} $in={6} />}
                {n.icon && <SmallIcon art={treeIcons[n.icon]} />}
                <TreeLabel $on={n.on}>{n.label}</TreeLabel>
              </TreeRow>
            ))}
          </Tree>
          <BrowserScroll>
            <HScroll $start>
              <IconButton $w={23} aria-label="向左滚动">
                <Chevron turn={90} />
              </IconButton>
              <Thumb $w={43} />
              <Spacer />
              <IconButton $w={23} aria-label="向右滚动">
                <Chevron turn={-90} />
              </IconButton>
            </HScroll>
          </BrowserScroll>
        </Browser>
      </Main>

      <StatusBar>
        <StatusText>就绪</StatusText>
        <StatusButton $gap={6} aria-label="工作集">
          <SmallIcon art={StatusIcons.worksets} />
        </StatusButton>
        <SelectBox $gap={6}>
          <Select aria-label="活动工作集">
            <option value="" />
          </Select>
          <SelectMark>
            <Chevron color="#9a9a9a" weight={1} />
          </SelectMark>
        </SelectBox>
        <StatusButton $gap={5} aria-label="编辑请求">
          <SmallIcon art={StatusIcons.request} />
        </StatusButton>
        <Count>:0</Count>
        <StatusButton $gap={8} aria-label="设计选项">
          <SmallIcon art={StatusIcons.options} />
        </StatusButton>
        <StatusButton $gap={6} aria-label="添加到集">
          <SmallIcon art={StatusIcons.exclude} />
        </StatusButton>
        <SelectBox $gap={0}>
          <Select aria-label="活动设计选项">
            <option>主模型</option>
          </Select>
          <SelectMark>
            <Chevron color="#9a9a9a" weight={1} />
          </SelectMark>
        </SelectBox>
        <Ime>
          <ImeLogo width="50" height="42" viewBox="0 0 50 42" aria-hidden="true">
            <circle cx="6" cy="18" r="4" fill="#f3c93b" stroke="#c79518" />
            <path d="M8 18 V30 L11 27 L14 33 L17 31Z" fill="#fff" stroke="#333" />
            <g transform="rotate(-9 29 21)">
              <rect x="11" y="4" width="36" height="34" rx="4" fill="#e8592a" />
              <path
                d="M40 12 Q19 9 19 15 Q19 20 29 21 Q40 22 38 27 Q36 32 17 29"
                fill="none"
                stroke="#fff"
                strokeWidth="6"
              />
            </g>
          </ImeLogo>
          <ImeTools>
            <ImeButton>中</ImeButton>
            {imeIcons.map((i) => (
              <ImeButton key={i.name} aria-label={i.name}>
                <svg width="24" height="24" viewBox="0 0 24 24" aria-hidden="true">{i.art}</svg>
              </ImeButton>
            ))}
          </ImeTools>
        </Ime>
      </StatusBar>
    </Window>
  );
}
